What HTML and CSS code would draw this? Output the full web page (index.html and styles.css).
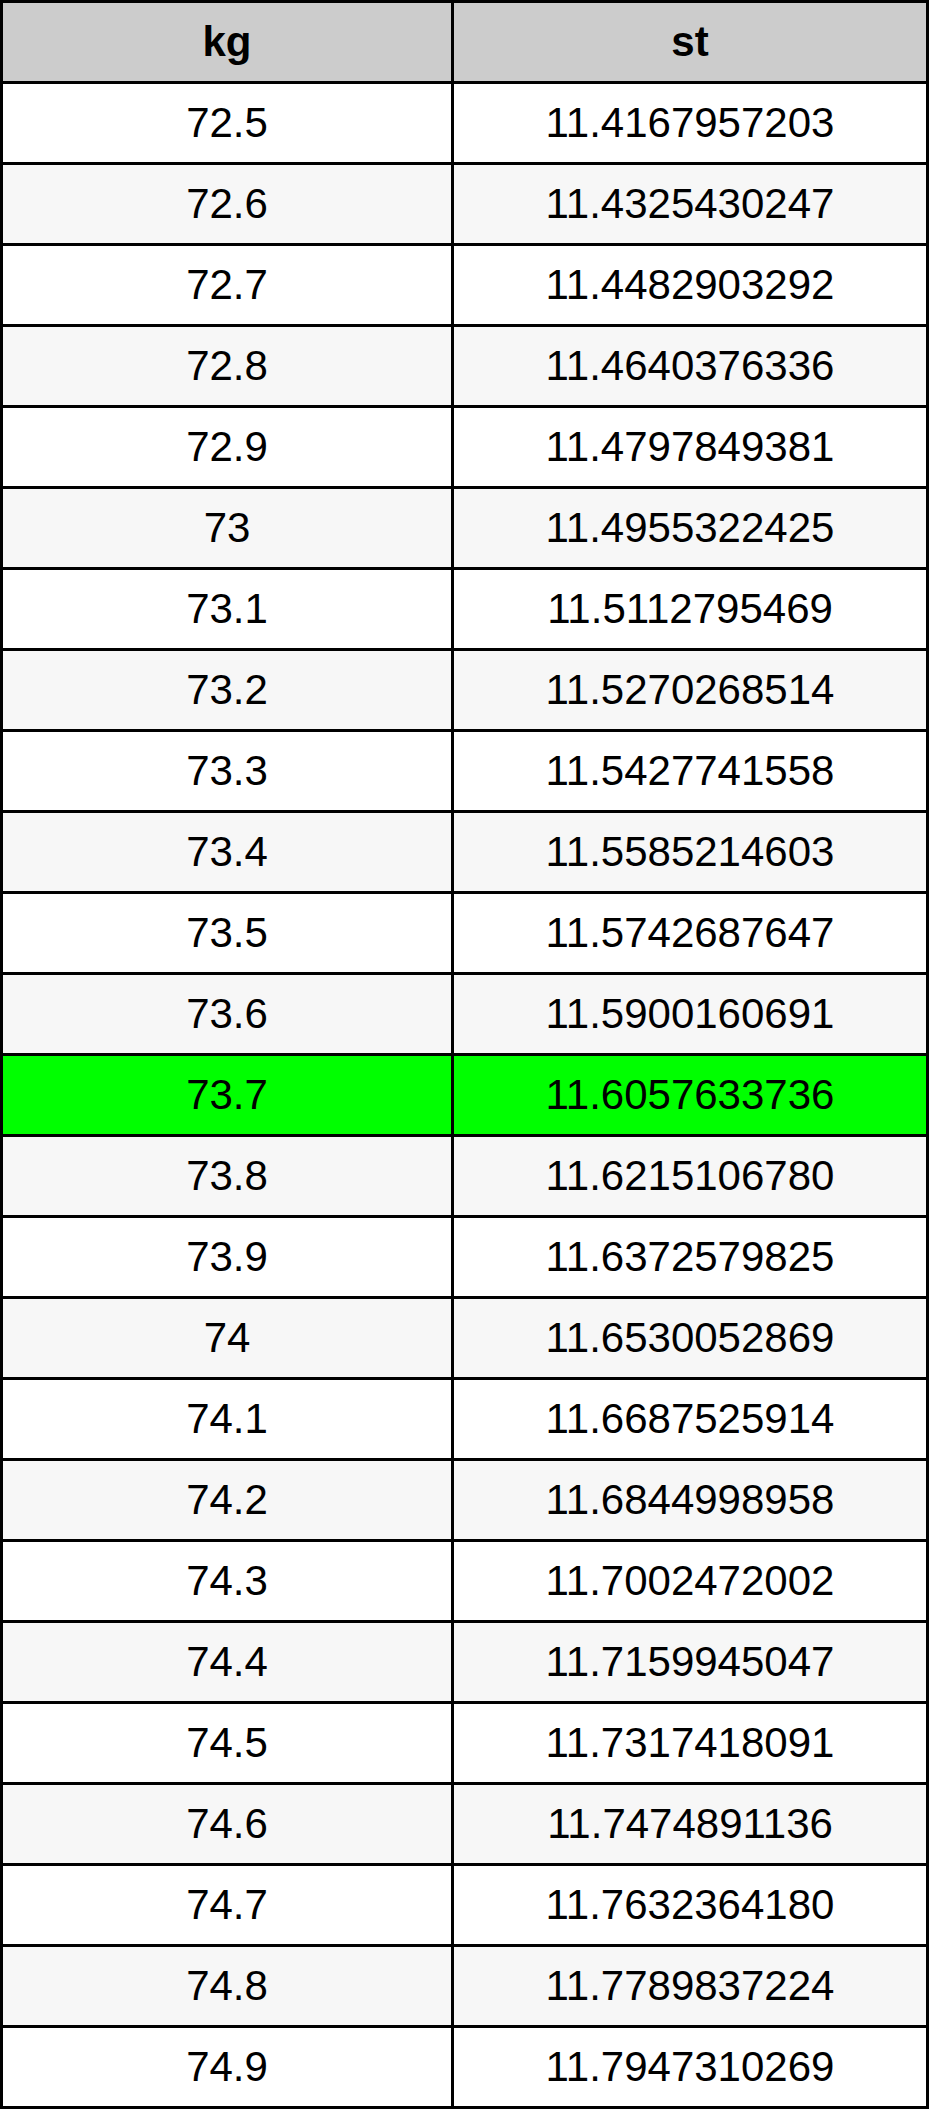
FILE: index.html
```html
<!DOCTYPE html>
<html>
<head>
<meta charset="utf-8">
<link rel="stylesheet" href="styles.css">
</head>
<body>
<table class="conv">
<thead>
<tr><th class="c1">kg</th><th class="c2">st</th></tr>
</thead>
<tbody>
<tr><td>72.5</td><td>11.4167957203</td></tr>
<tr><td>72.6</td><td>11.4325430247</td></tr>
<tr><td>72.7</td><td>11.4482903292</td></tr>
<tr><td>72.8</td><td>11.4640376336</td></tr>
<tr><td>72.9</td><td>11.4797849381</td></tr>
<tr><td>73</td><td>11.4955322425</td></tr>
<tr><td>73.1</td><td>11.5112795469</td></tr>
<tr><td>73.2</td><td>11.5270268514</td></tr>
<tr><td>73.3</td><td>11.5427741558</td></tr>
<tr><td>73.4</td><td>11.5585214603</td></tr>
<tr><td>73.5</td><td>11.5742687647</td></tr>
<tr><td>73.6</td><td>11.5900160691</td></tr>
<tr class="hl"><td>73.7</td><td>11.6057633736</td></tr>
<tr><td>73.8</td><td>11.6215106780</td></tr>
<tr><td>73.9</td><td>11.6372579825</td></tr>
<tr><td>74</td><td>11.6530052869</td></tr>
<tr><td>74.1</td><td>11.6687525914</td></tr>
<tr><td>74.2</td><td>11.6844998958</td></tr>
<tr><td>74.3</td><td>11.7002472002</td></tr>
<tr><td>74.4</td><td>11.7159945047</td></tr>
<tr><td>74.5</td><td>11.7317418091</td></tr>
<tr><td>74.6</td><td>11.7474891136</td></tr>
<tr><td>74.7</td><td>11.7632364180</td></tr>
<tr><td>74.8</td><td>11.7789837224</td></tr>
<tr><td>74.9</td><td>11.7947310269</td></tr>
</tbody>
</table>
</body>
</html>
```
FILE: styles.css
```css
html, body {
  margin: 0;
  padding: 0;
  background: #ffffff;
}
.conv {
  border-collapse: separate;
  border-spacing: 0;
  border-top: 3px solid #000;
  border-left: 3px solid #000;
  font-family: "Liberation Sans", Arial, sans-serif;
  font-size: 42px;
  color: #000;
  table-layout: fixed;
  width: 929px;
}
.conv th, .conv td {
  border-right: 3px solid #000;
  border-bottom: 3px solid #000;
  height: 78px;
  padding: 0;
  text-align: center;
  vertical-align: middle;
  box-sizing: content-box;
  line-height: 1;
}
.conv th {
  background: #cccccc;
  font-weight: bold;
}
.conv .c1 { width: 448px; }
.conv .c2 { width: 472px; }
.conv tbody tr:nth-child(odd) td { background: #ffffff; }
.conv tbody tr:nth-child(even) td { background: #f7f7f7; }
.conv tbody tr.hl td { background: #00ff00; }
```
